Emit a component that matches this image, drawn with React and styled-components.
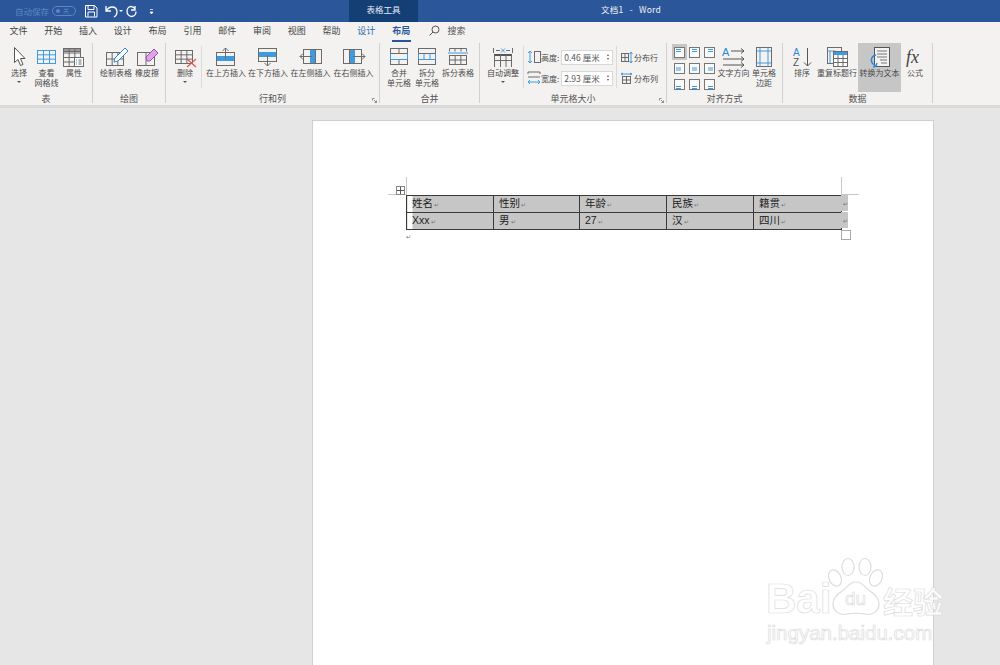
import styled, { createGlobalStyle } from "styled-components";

const Global = createGlobalStyle`
  html, body { margin: 0; padding: 0; height: 100%; overflow: hidden; background: #e6e6e6; }
  body { font-family: "Noto Sans CJK SC", "Noto Sans", sans-serif; }
`;

const Shell = styled.div`
  width: 1000px;
  height: 665px;
  display: flex;
  flex-direction: column;
  overflow: hidden;
  position: relative;
`;

const TitleBar = styled.div`
  height: 22px;
  background: #2b579a;
  display: flex;
  align-items: center;
  color: #fff;
  font-size: 8.5px;
  flex: none;
`;

const AutoSave = styled.div`
  width: 85px;
  padding: 0 0 1px 15px;
  box-sizing: border-box;
  display: flex;
  align-items: center;
  gap: 3px;
  color: #5f86c0;
  font-size: 8.5px;
`;

const Toggle = styled.span`
  width: 24px;
  height: 10px;
  border: 1px solid #5f86c0;
  border-radius: 6px;
  box-sizing: border-box;
  display: flex;
  align-items: center;
  padding-left: 3px;
  gap: 3px;
  font-size: 6px;
  &::before {
    content: "";
    width: 4px;
    height: 4px;
    border-radius: 50%;
    background: #5f86c0;
  }
`;

const Quick = styled.div`
  width: 264px;
  display: flex;
  align-items: center;
  height: 22px;
`;

const ContextTab = styled.div`
  width: 69px;
  height: 22px;
  box-sizing: border-box;
  padding-bottom: 4px;
  background: #133f75;
  display: flex;
  align-items: center;
  justify-content: center;
  color: #e6ecf5;
`;

const DocName = styled.div`
  margin: 0 0 4px 183px;
  font-size: 8.5px;
  letter-spacing: 0.2px;
  white-space: pre;
  color: #eef2f8;
`;

const TabRow = styled.div`
  height: 20px;
  background: #f3f2f1;
  display: flex;
  flex: none;
  align-items: center;
  padding-left: 1px;
`;

const Tab = styled.div`
  width: 34.8px;
  height: 20px;
  box-sizing: border-box;
  padding-bottom: 3px;
  display: flex;
  align-items: center;
  justify-content: center;
  font-size: 9px;
  position: relative;
  color: ${(p) => (p.$active ? "#2b579a" : p.$blue ? "#2b6cb0" : "#444")};
  font-weight: ${(p) => (p.$active ? 700 : 400)};
  ${(p) =>
    p.$active &&
    `&::after {
      content: "";
      position: absolute;
      left: 8px;
      right: 8px;
      bottom: 0;
      height: 2px;
      background: #2b579a;
    }`}
`;

const SearchBox = styled.div`
  display: flex;
  align-items: center;
  gap: 8px;
  margin-left: 10px;
  padding-bottom: 3px;
  font-size: 9px;
  color: #555;
`;

const Ribbon = styled.div`
  height: 63px;
  background: #f3f2f1;
  display: flex;
  flex: none;
  border-bottom: 3px solid #dadada;
`;

const Group = styled.div`
  width: ${(p) => p.$w}px;
  box-sizing: border-box;
  margin: 1px 0 2px;
  border-right: 1px solid #d2d0ce;
  display: flex;
  flex-direction: column;
  position: relative;
  padding-left: ${(p) => p.$pad || 0}px;
`;

const GroupBody = styled.div`
  height: 50px;
  display: flex;
`;

const GroupLabel = styled.div`
  margin-top: 1px;
  margin-left: ${(p) => -(p.$pad || 0)}px;
  text-align: center;
  font-size: 9px;
  line-height: 12px;
  color: #555;
`;

const Launcher = styled.svg`
  position: absolute;
  right: 2px;
  bottom: 0;
`;

const Big = styled.div`
  width: ${(p) => p.$w}px;
  height: 49px;
  display: flex;
  flex-direction: column;
  align-items: center;
  padding-top: 3px;
  box-sizing: border-box;
  background: ${(p) => (p.$on ? "#c6c6c6" : "transparent")};
  flex: none;
`;

const IconWrap = styled.div`
  height: 21px;
  display: flex;
  align-items: center;
  justify-content: center;
  flex: none;
`;

const Label = styled.div`
  margin-top: 1px;
  font-size: 8px;
  line-height: 10px;
  text-align: center;
  color: #4a4a4a;
  white-space: pre-line;
`;

const Caret = styled.div`
  width: 0;
  height: 0;
  margin-top: 3px;
  border-left: 2px solid transparent;
  border-right: 2px solid transparent;
  border-top: 2px solid #555;
`;

const Sep = styled.div`
  width: 1px;
  height: 42px;
  margin: 3px ${(p) => p.$r || 3}px 0 ${(p) => p.$l || 3}px;
  background: #dcdad8;
  flex: none;
`;

const SizeCol = styled.div`
  width: 88px;
  display: flex;
  flex-direction: column;
  gap: 3px;
  padding-top: 5px;
  flex: none;
`;

const SizeRow = styled.div`
  display: flex;
  align-items: center;
  height: 18px;
  font-size: 8px;
  color: #4a4a4a;
`;

const Spin = styled.div`
  width: 52px;
  height: 15px;
  margin-left: 2px;
  background: #fff;
  border: 1px solid #d8d8d8;
  box-sizing: border-box;
  display: flex;
  align-items: center;
  justify-content: space-between;
  padding: 0 3px 0 2px;
  font-size: 8.5px;
  color: #555;
`;

const Arrows = styled.span`
  display: flex;
  flex-direction: column;
  gap: 2px;
  &::before, &::after {
    content: "";
    width: 0;
    height: 0;
    border-left: 1.5px solid transparent;
    border-right: 1.5px solid transparent;
  }
  &::before { border-bottom: 2px solid #555; }
  &::after { border-top: 2px solid #555; }
`;

const DistCol = styled.div`
  display: flex;
  flex-direction: column;
  gap: 3px;
  padding-top: 5px;
`;

const DistRow = styled.div`
  height: 18px;
  display: flex;
  align-items: center;
  gap: 1px;
  font-size: 8px;
  color: #4a4a4a;
`;

const AlignGrid = styled.div`
  width: 45px;
  display: grid;
  grid-template-columns: repeat(3, 15px);
  grid-auto-rows: 16px;
  padding-top: 1px;
  flex: none;
`;

const AlignCell = styled.div`
  width: 15px;
  height: 16px;
  display: flex;
  align-items: center;
  justify-content: center;
  background: ${(p) => (p.$on ? "#c6c6c6" : "transparent")};
`;

const Desk = styled.div`
  flex: 1;
  padding: 12px 0 0 312px;
  background: #e6e6e6;
`;

const Page = styled.div`
  width: 622px;
  height: 560px;
  box-sizing: border-box;
  background: #fff;
  border: 1px solid #cfcfcf;
  padding: 74px 0 0 93px;
  position: relative;
`;

const TableHolder = styled.div`
  position: relative;
  width: 435px;
`;

const Sheet = styled.table`
  width: 435px;
  border-collapse: collapse;
  table-layout: fixed;
  font-size: 10.5px;
  color: #222;
`;

const Col = styled.col`
  width: ${(p) => p.$w}px;
`;

const Cell = styled.td`
  height: 16px;
  padding: 0 0 0 5px;
  border: 1px solid #3a3a3a;
  background: ${(p) =>
    p.$first ? "linear-gradient(90deg, #fff 5px, #c6c6c6 5px)" : "#c6c6c6"};
  line-height: 14px;
  font-family: "Liberation Sans", "Noto Sans CJK SC", sans-serif;
  white-space: nowrap;
`;

const Mark = styled.span`
  font-size: 6px;
  color: #777;
  margin-left: 1px;
`;

const CropV = styled.div`
  position: absolute;
  top: -18px;
  left: ${(p) => p.$x}px;
  width: 1px;
  height: 18px;
  background: #c8c8c8;
`;

const CropH = styled.div`
  position: absolute;
  top: -1px;
  left: ${(p) => p.$x}px;
  width: 18px;
  height: 1px;
  background: #c8c8c8;
`;

const MoveHandle = styled.div`
  position: absolute;
  left: -10px;
  top: -9px;
  width: 9px;
  height: 9px;
  box-sizing: border-box;
  border: 1px solid #888;
  background: #fff;
  display: flex;
  align-items: center;
  justify-content: center;
`;

const RowEnd = styled.div`
  position: absolute;
  left: 435px;
  top: ${(p) => p.$y}px;
  width: 7px;
  height: 16px;
  background: #c6c6c6;
  display: flex;
  align-items: center;
  justify-content: center;
`;

const SizeHandle = styled.div`
  position: absolute;
  left: 435px;
  top: 35px;
  width: 10px;
  height: 10px;
  box-sizing: border-box;
  border: 1px solid #aaa;
  background: #fff;
`;

const AfterMark = styled.div`
  font-size: 6px;
  line-height: 10px;
  margin-top: 2px;
  color: #777;
`;

const Watermark = styled.div`
  position: absolute;
  left: 766px;
  top: 555px;
  width: 190px;
  height: 95px;
  color: rgba(255, 255, 255, 0.85);
  font-family: "Liberation Sans", sans-serif;
  -webkit-text-stroke: 0.7px #dcdcdc;
`;

const Paw = styled.svg`
  position: absolute;
  left: 0;
  top: 0;
`;

const WmBai = styled.div`
  position: absolute;
  left: 0;
  top: 23px;
  font-size: 42px;
  line-height: 42px;
  font-weight: 700;
`;

const WmDu = styled.div`
  position: absolute;
  left: 79px;
  top: 33px;
  font-size: 19px;
  line-height: 22px;
`;

const WmCn = styled.div`
  position: absolute;
  left: 117px;
  top: 28px;
  font-size: 30px;
  line-height: 34px;
  font-weight: 700;
  font-family: "Noto Sans CJK SC", sans-serif;
`;

const WmUrl = styled.div`
  position: absolute;
  left: 1px;
  top: 66px;
  font-size: 20.5px;
  line-height: 24px;
`;

const G = "#6b6b6b";
const B = "#3f9ae0";

const Svg = ({ w = 26, h = 22, children }) => (
  <svg width={w} height={h} viewBox={`0 0 ${w} ${h}`} fill="none" stroke={G} strokeWidth="1">
    {children}
  </svg>
);

const GridLines = ({ x, y, w, h, cols, rows, color = G }) => {
  const lines = [];
  for (let i = 1; i < cols; i++) {
    const px = x + (w * i) / cols;
    lines.push(<line key={`c${i}`} x1={px} y1={y} x2={px} y2={y + h} stroke={color} />);
  }
  for (let i = 1; i < rows; i++) {
    const py = y + (h * i) / rows;
    lines.push(<line key={`r${i}`} x1={x} y1={py} x2={x + w} y2={py} stroke={color} />);
  }
  return (
    <g>
      <rect x={x} y={y} width={w} height={h} stroke={color} />
      {lines}
    </g>
  );
};

const icons = {
  select: (
    <Svg>
      <path d="M8.500 1.500v15l3.500-3 2.500 6 2.500-1-2.500-6h4.500z" stroke="#555" fill="#fff" />
    </Svg>
  ),
  gridlines: (
    <Svg>
      <GridLines x={3.5} y={4.5} w={18} h={13} cols={3} rows={3} color={B} />
    </Svg>
  ),
  props: (
    <Svg>
      <rect x="2.500" y="2.500" width="17" height="3" fill="#999" />
      <GridLines x={2.5} y={2.5} w={17} h={18} cols={3} rows={4} />
      <rect x="13.500" y="11.500" width="9" height="9" fill="#fff" stroke={G} />
      <path d="M15 14h1M15 16h1M15 18h1" stroke={B} />
      <path d="M17.500 14h3M17.500 16h3M17.500 18h3" stroke={G} />
    </Svg>
  ),
  draw: (
    <Svg>
      <GridLines x={3.5} y={6.5} w={17} h={13} cols={3} rows={2} />
      <path d="M11 16l1-4L22 2l3 3-10 10z" fill="#fff" stroke="#2b88d8" />
    </Svg>
  ),
  eraser: (
    <Svg>
      <GridLines x={3.5} y={6.5} w={17} h={13} cols={2} rows={1} />
      <path d="M12 11l8-8 4 4-8 8h-3z" fill="#d9a6e0" stroke="#a64bc0" />
    </Svg>
  ),
  del: (
    <Svg>
      <GridLines x={3.5} y={4.5} w={17} h={13} cols={3} rows={3} />
      <path d="M15 13l9 8M24 13l-9 8" stroke="#e0554a" strokeWidth="1.200" />
    </Svg>
  ),
  above: (
    <Svg>
      <rect x="3.500" y="6.500" width="18" height="13" />
      <rect x="4" y="10" width="17" height="5" fill={B} stroke="none" />
      <path d="M12.500 13V2M9.500 5l3-3 3 3" />
    </Svg>
  ),
  below: (
    <Svg>
      <rect x="3.500" y="2.500" width="18" height="13" />
      <rect x="4" y="6" width="17" height="5" fill={B} stroke="none" />
      <path d="M12.500 9v11M9.500 17l3 3 3-3" />
    </Svg>
  ),
  left: (
    <Svg>
      <rect x="5.500" y="3.500" width="18" height="14" />
      <rect x="12" y="4" width="5" height="13" fill={B} stroke="none" />
      <path d="M17.500 3.500v14M14 10.500H2M5 7.500l-3 3 3 3" />
    </Svg>
  ),
  right: (
    <Svg>
      <rect x="2.500" y="3.500" width="18" height="14" />
      <rect x="9" y="4" width="5" height="13" fill={B} stroke="none" />
      <path d="M8.500 3.500v14M12 10.500h12M21 7.500l3 3-3 3" />
    </Svg>
  ),
  merge: (
    <Svg>
      <rect x="4.500" y="2.500" width="17" height="16" stroke={G} />
      <path d="M13 2.500v5M4.500 7.500h17M4.500 13.500h17M13 13.500v5" />
      <path d="M4.500 7.500v6h17v-6" stroke={B} />
    </Svg>
  ),
  split: (
    <Svg>
      <rect x="4.500" y="2.500" width="17" height="16" />
      <path d="M4.500 7.500h17M4.500 13.500h17" />
      <path d="M4.500 7.500v6h17v-6M10 7.500v6M16 7.500v6" stroke={B} />
    </Svg>
  ),
  splitTable: (
    <Svg>
      <GridLines x={4.5} y={9.5} w={17} h={9} cols={3} rows={2} />
      <path d="M4.500 2.500h17v3M4.500 2.500v3M10 2.500v3M16 2.500v3" />
      <path d="M3 7h20" stroke={B} />
    </Svg>
  ),
  autofit: (
    <Svg>
      <path d="M3.500 2v5M22.500 2v5M6 4.500h4M16 4.500h4" />
      <path d="M11 2.500l4 4M15 2.500l-4 4" stroke={B} />
      <path d="M4 9h18" strokeWidth="2" stroke="#555" />
      <path d="M4.500 9v12M10.500 9v12M16 9v12M21.500 9v12M4 14.500h18" />
    </Svg>
  ),
  textDir: (
    <Svg>
      <text x="1" y="10" fontSize="11" fill="#2b88d8" stroke="none" fontFamily="Liberation Sans">A</text>
      <path d="M10 5h13M20 2.500l3 2.500-3 2.500M2 13h21M20 10.500l3 2.500-3 2.500M2 19h21M20 16.500l3 2.500-3 2.500" stroke="#555" />
    </Svg>
  ),
  margins: (
    <Svg>
      <rect x="5.500" y="1.500" width="15" height="19" stroke={G} />
      <path d="M9 1.500v19M17 1.500v19M5.500 5h15M5.500 17h15" stroke={B} />
    </Svg>
  ),
  sort: (
    <Svg>
      <text x="4" y="10" fontSize="10" fill="#2b88d8" stroke="none" fontFamily="Liberation Sans">A</text>
      <text x="4" y="20" fontSize="10" fill="#555" stroke="none" fontFamily="Liberation Sans">Z</text>
      <path d="M18.500 2v18M15 16.500l3.500 3.500 3.500-3.500" stroke="#555" />
    </Svg>
  ),
  repeat: (
    <Svg>
      <rect x="3.500" y="1.500" width="14" height="16" stroke={G} fill="#f3f2f1" />
      <path d="M3.500 5h8M6 5v12" stroke={B} />
      <rect x="9.500" y="5.500" width="14" height="15" fill="#fff" />
      <rect x="10" y="6" width="13" height="3" fill={B} stroke="none" />
      <path d="M10 12.500h13M10 16.500h13M14 9v11M19 9v11" />
    </Svg>
  ),
  convert: (
    <Svg>
      <rect x="7.500" y="1.500" width="15" height="19" fill="#f2f2f2" stroke="#555" />
      <path d="M10 5h10M10 8h10M10 11h10M13 14h7M14 17h6" stroke="#777" />
      <path d="M9 9c-5 1-6 6-3 9l3 2M9 20l1-3M9 20l-3 1" stroke="#2b88d8" strokeWidth="1.400" />
    </Svg>
  ),
};

const AlignIcon = ({ row, col }) => {
  const y = 3 + row * 2.5;
  const x1 = col === 2 ? 5 : col === 1 ? 4 : 3;
  const x2 = col === 0 ? 8 : col === 1 ? 9 : 10;
  return (
    <svg width="13" height="13" viewBox="0 0 13 13" fill="none">
      <rect x="1.500" y="1.500" width="10" height="10" stroke="#777" fill="#fbfbfb" />
      <path d={`M${x1} ${y + 0.5}H${x2}M${x1} ${y + 2.5}H${x2}`} stroke={B} />
    </svg>
  );
};

const LaunchIcon = () => (
  <Launcher width="5" height="5" viewBox="0 0 5 5" fill="none" stroke="#777" strokeWidth="0.800">
    <path d="M0.500 2.500V0.500H2.500M2 2l2.500 2.500M4.500 2.500v2h-2" />
  </Launcher>
);

const BigBtn = ({ w, icon, label, caret, on }) => (
  <Big $w={w} $on={on}>
    <IconWrap>{icon}</IconWrap>
    <Label>{label}</Label>
    {caret && <Caret />}
  </Big>
);

const tabs = ["文件", "开始", "插入", "设计", "布局", "引用", "邮件", "审阅", "视图", "帮助"];
const rows = [
  ["姓名", "性别", "年龄", "民族", "籍贯"],
  ["Xxx", "男", "27", "汉", "四川"],
];
const colWidths = [87, 86, 87, 87, 88];

export default function App() {
  return (
    <Shell>
      <Global />
      <TitleBar>
        <AutoSave>
          自动保存
          <Toggle>关</Toggle>
        </AutoSave>
        <Quick>
          <svg width="70" height="16" viewBox="0 0 70 16" fill="none" stroke="#fff">
            <path d="M0.500 2.500h9l2.500 2.500v9h-11.500zM3 2.500v4h6v-4M3 13.500v-4.500h6.500v4.500" />
            <path d="M21 3v5h5M21 8c2-3 4-4 6-4 3 0 5 2 5 5 0 2-1 4-3 5" strokeWidth="1.300" />
            <path d="M34 7h4l-2 2z" fill="#fff" stroke="none" />
            <path d="M50 3v4h-4M50 6c-1-1.500-2.500-2.500-4-2.500-2.500 0-4 2.500-4 5s2 5 4.500 5 4.500-2 4.500-5" strokeWidth="1.300" />
            <path d="M65 6.500h3M65 9h3l-1.500 2z" fill="#fff" strokeWidth="0.700" />
          </svg>
        </Quick>
        <ContextTab>表格工具</ContextTab>
        <DocName>{"文档1   -   Word"}</DocName>
      </TitleBar>

      <TabRow>
        {tabs.map((t, i) => (
          <Tab key={`${t}${i}`}>{t}</Tab>
        ))}
        <Tab $blue>设计</Tab>
        <Tab $active>布局</Tab>
        <SearchBox>
          <svg width="11" height="11" viewBox="0 0 11 11" fill="none" stroke="#555">
            <circle cx="6.500" cy="4.500" r="3.500" />
            <path d="M4 7l-3.500 3.500" />
          </svg>
          搜索
        </SearchBox>
      </TabRow>

      <Ribbon>
        <Group $w={93} $pad={5}>
          <GroupBody>
            <BigBtn w={28} icon={icons.select} label="选择" caret />
            <BigBtn w={27} icon={icons.gridlines} label={"查看\n网格线"} />
            <BigBtn w={28} icon={icons.props} label="属性" />
          </GroupBody>
          <GroupLabel $pad={5}>表</GroupLabel>
        </Group>

        <Group $w={73} $pad={6}>
          <GroupBody>
            <BigBtn w={34} icon={icons.draw} label="绘制表格" />
            <BigBtn w={28} icon={icons.eraser} label="橡皮擦" />
          </GroupBody>
          <GroupLabel $pad={6}>绘图</GroupLabel>
        </Group>

        <Group $w={214} $pad={6}>
          <GroupBody>
            <BigBtn w={26} icon={icons.del} label="删除" caret />
            <Sep $l={3} $r={3} />
            <BigBtn w={42} icon={icons.above} label="在上方插入" />
            <BigBtn w={42} icon={icons.below} label="在下方插入" />
            <BigBtn w={43} icon={icons.left} label="在左侧插入" />
            <BigBtn w={43} icon={icons.right} label="在右侧插入" />
          </GroupBody>
          <GroupLabel $pad={6}>行和列</GroupLabel>
          <LaunchIcon />
        </Group>

        <Group $w={100} $pad={5}>
          <GroupBody>
            <BigBtn w={28} icon={icons.merge} label={"合并\n单元格"} />
            <BigBtn w={28} icon={icons.split} label={"拆分\n单元格"} />
            <BigBtn w={34} icon={icons.splitTable} label="拆分表格" />
          </GroupBody>
          <GroupLabel $pad={5}>合并</GroupLabel>
        </Group>

        <Group $w={187} $pad={5}>
          <GroupBody>
            <BigBtn w={36} icon={icons.autofit} label="自动调整" caret />
            <Sep $l={2} $r={3} />
            <SizeCol>
              <SizeRow>
                <svg width="14" height="14" viewBox="0 0 14 14" fill="none" stroke={B}>
                  <path d="M3 1v12M1 3l2-2 2 2M1 11l2 2 2-2" />
                  <rect x="7.500" y="1.500" width="6" height="11" stroke={G} />
                </svg>
                高度:
                <Spin>
                  0.46 厘米
                  <Arrows />
                </Spin>
              </SizeRow>
              <SizeRow>
                <svg width="14" height="14" viewBox="0 0 14 14" fill="none" stroke={B}>
                  <path d="M1 3V1h12v2M1 6h12" stroke={G} />
                  <path d="M1 11h12M3 9l-2 2 2 2M11 9l2 2-2 2" />
                </svg>
                宽度:
                <Spin>
                  2.93 厘米
                  <Arrows />
                </Spin>
              </SizeRow>
            </SizeCol>
            <Sep $l={1} $r={3} />
            <DistCol>
              <DistRow>
                <svg width="13" height="13" viewBox="0 0 13 13" fill="none" stroke={G}>
                  <rect x="1.500" y="2.500" width="7" height="8" />
                  <path d="M5 2.500v8M1.500 6.500h7" />
                  <path d="M11 1v11M9.500 3L11 1l1.500 2M9.500 10l1.500 2 1.500-2" stroke={B} />
                </svg>
                分布行
              </DistRow>
              <DistRow>
                <svg width="13" height="13" viewBox="0 0 13 13" fill="none" stroke={G}>
                  <rect x="2.500" y="4.500" width="8" height="7" />
                  <path d="M6.500 4.500v7M2.500 8h8" />
                  <path d="M1 2h11M3 1L1 2l2 1M10 1l2 1-2 1" stroke={B} />
                </svg>
                分布列
              </DistRow>
            </DistCol>
          </GroupBody>
          <GroupLabel $pad={5}>单元格大小</GroupLabel>
          <LaunchIcon />
        </Group>

        <Group $w={116} $pad={5}>
          <GroupBody>
            <AlignGrid>
              {[0, 1, 2].map((r) =>
                [0, 1, 2].map((c) => (
                  <AlignCell key={`${r}${c}`} $on={r === 0 && c === 0}>
                    <AlignIcon row={r} col={c} />
                  </AlignCell>
                ))
              )}
            </AlignGrid>
            <BigBtn w={33} icon={icons.textDir} label="文字方向" />
            <BigBtn w={28} icon={icons.margins} label={"单元格\n边距"} />
          </GroupBody>
          <GroupLabel $pad={5}>对齐方式</GroupLabel>
        </Group>

        <Group $w={150} $pad={5}>
          <GroupBody>
            <BigBtn w={28} icon={icons.sort} label="排序" />
            <BigBtn w={42} icon={icons.repeat} label="重复标题行" />
            <BigBtn w={43} icon={icons.convert} label="转换为文本" on />
            <BigBtn
              w={28}
              icon={
                <svg width="20" height="22" viewBox="0 0 20 22">
                  <text x="1" y="17" fontSize="18" fontStyle="italic" fill="#444" fontFamily="Liberation Serif">fx</text>
                </svg>
              }
              label="公式"
            />
          </GroupBody>
          <GroupLabel $pad={5}>数据</GroupLabel>
        </Group>
      </Ribbon>

      <Desk>
        <Page>
          <TableHolder>
            <CropV $x={0} />
            <CropV $x={435} />
            <CropH $x={-18} />
            <CropH $x={435} />
            <MoveHandle>
              <svg width="7" height="7" viewBox="0 0 7 7" fill="none" stroke="#555">
                <path d="M3.500 0v7M0 3.500h7" />
              </svg>
            </MoveHandle>
            <Sheet>
              <colgroup>
                {colWidths.map((w, i) => (
                  <Col key={i} $w={w} />
                ))}
              </colgroup>
              <tbody>
                {rows.map((row, r) => (
                  <tr key={r}>
                    {row.map((text, c) => (
                      <Cell key={c} $first={c === 0}>
                        {text}
                        <Mark>↵</Mark>
                      </Cell>
                    ))}
                  </tr>
                ))}
              </tbody>
            </Sheet>
            <RowEnd $y={0}>
              <Mark>↵</Mark>
            </RowEnd>
            <RowEnd $y={17}>
              <Mark>↵</Mark>
            </RowEnd>
            <SizeHandle />
            <AfterMark>↵</AfterMark>
          </TableHolder>
        </Page>
      </Desk>

      <Watermark>
        <Paw width="190" height="70" viewBox="0 0 190 70" fill="rgba(255,255,255,0.6)" stroke="#dcdcdc" strokeWidth="1.200">
          <ellipse cx="69" cy="23" rx="6" ry="8.500" transform="rotate(-25 69 23)" />
          <ellipse cx="82" cy="12" rx="6" ry="8.500" />
          <ellipse cx="99" cy="12" rx="6" ry="8.500" />
          <ellipse cx="110" cy="23" rx="6" ry="8.500" transform="rotate(25 110 23)" />
          <path d="M90 27c-7 0-9 6-14 9-6 4-9 8-9 13 0 7 7 12 14 10 6-1 12-1 18 0 7 2 14-3 14-10 0-5-3-9-9-13-5-3-7-9-14-9z" />
        </Paw>
        <WmBai>Bai</WmBai>
        <WmDu>du</WmDu>
        <WmCn>经验</WmCn>
        <WmUrl>jingyan.baidu.com</WmUrl>
      </Watermark>
    </Shell>
  );
}
